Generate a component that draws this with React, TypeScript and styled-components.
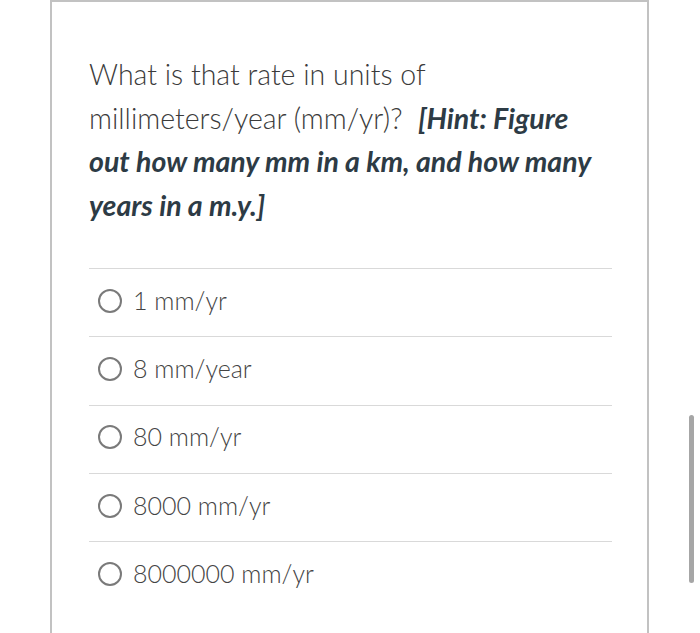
import React from "react";
import styled, { createGlobalStyle } from "styled-components";

const Global = createGlobalStyle`
  html, body { margin: 0; padding: 0; background: #ffffff; overflow: hidden; }
  body { font-family: Lato, "Noto Sans", sans-serif; }
`;

const Page = styled.div`
  position: relative;
  width: 700px;
  height: 633px;
  overflow: hidden;
  background: #ffffff;
`;

const Card = styled.div`
  margin-left: 50px;
  width: 599px;
  min-height: 700px;
  box-sizing: border-box;
  border: 2px solid #c2c2c2;
  border-bottom: none;
  padding: 51px 35px 0 37px;
`;

const Question = styled.p`
  margin: 0;
  font-size: 28.5px;
  line-height: 43.5px;
  font-weight: 300;
  color: #3b3b3b;
`;

const Hint = styled.strong`
  font-weight: 700;
  font-style: italic;
  color: #2d3b45;
`;

const Options = styled.div`
  margin-top: 41px;
  display: flex;
  flex-direction: column;
`;

const Option = styled.label`
  display: flex;
  align-items: center;
  gap: 11px;
  height: 68.3px;
  box-sizing: border-box;
  border-top: 1.5px solid #d9d9d9;
  padding: 0 0 6px 9px;
  font-size: 25px;
  font-weight: 300;
  color: #444444;
`;

const Radio = styled.span`
  width: 24px;
  height: 24px;
  box-sizing: border-box;
  border: 2.5px solid #7a7a7a;
  border-radius: 50%;
  flex: none;
  margin-top: 2px;
`;

const Scrollbar = styled.div`
  position: absolute;
  left: 689px;
  top: 415px;
  width: 5px;
  height: 168px;
  border-radius: 3px;
  background: #a6a6a6;
`;

const answers = ["1 mm/yr", "8 mm/year", "80 mm/yr", "8000 mm/yr", "8000000 mm/yr"];

export default function App() {
  return (
    <Page>
      <Global />
      <Card>
        <Question>
          What is that rate in units of millimeters/year (mm/yr)?&nbsp;{" "}
          <Hint>[Hint: Figure out how many mm in a km, and how many years in a m.y.]</Hint>
        </Question>
        <Options>
          {answers.map((a) => (
            <Option key={a}>
              <Radio />
              {a}
            </Option>
          ))}
        </Options>
      </Card>
      <Scrollbar />
    </Page>
  );
}
